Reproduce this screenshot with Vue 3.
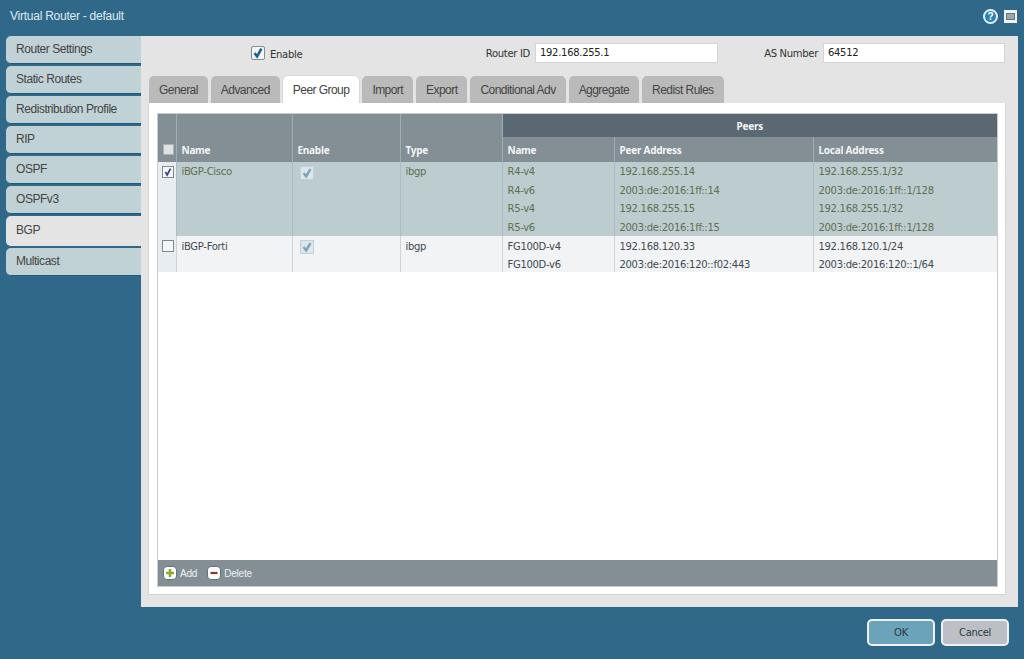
<script setup>
const sideItems = ['Router Settings', 'Static Routes', 'Redistribution Profile', 'RIP', 'OSPF', 'OSPFv3', 'BGP', 'Multicast']
const tabs = ['General', 'Advanced', 'Peer Group', 'Import', 'Export', 'Conditional Adv', 'Aggregate', 'Redist Rules']

const groups = [
  {
    name: 'iBGP-Cisco',
    checked: true,
    peers: [
      ['R4-v4', '192.168.255.14', '192.168.255.1/32'],
      ['R4-v6', '2003:de:2016:1ff::14', '2003:de:2016:1ff::1/128'],
      ['R5-v4', '192.168.255.15', '192.168.255.1/32'],
      ['R5-v6', '2003:de:2016:1ff::15', '2003:de:2016:1ff::1/128']
    ]
  },
  {
    name: 'iBGP-Forti',
    checked: false,
    peers: [
      ['FG100D-v4', '192.168.120.33', '192.168.120.1/24'],
      ['FG100D-v6', '2003:de:2016:120::f02:443', '2003:de:2016:120::1/64']
    ]
  }
]
</script>

<template>
  <div class="dialog">
    <header class="titlebar">
      <span class="title">Virtual Router - default</span>
      <div class="title-icons">
        <span class="help">?</span>
        <span class="restore"><i></i></span>
      </div>
    </header>

    <div class="body">
      <nav class="side">
        <div v-for="item in sideItems" :key="item" class="side-item" :class="{ active: item === 'BGP' }">{{ item }}</div>
      </nav>

      <main class="panel">
        <div class="top-row">
          <label class="enable">
            <span class="check big">
              <svg viewBox="0 0 14 14"><path d="M3 7l3 4 5-9" fill="none" stroke="#1f628e" stroke-width="3"/></svg>
            </span>
            <span class="enable-label">Enable</span>
          </label>
          <div class="field router-id">
            <span>Router ID</span>
            <div class="input">192.168.255.1</div>
          </div>
          <div class="field as-num">
            <span>AS Number</span>
            <div class="input">64512</div>
          </div>
        </div>

        <div class="tabs">
          <div v-for="tab in tabs" :key="tab" class="tab" :class="{ active: tab === 'Peer Group' }">{{ tab }}</div>
        </div>

        <div class="tab-body">
          <div class="grid-wrap">
            <table class="grid">
              <colgroup>
                <col style="width: 18px" />
                <col style="width: 116px" />
                <col style="width: 108px" />
                <col style="width: 102px" />
                <col style="width: 112px" />
                <col style="width: 199px" />
                <col />
              </colgroup>
              <thead>
                <tr class="head-top">
                  <th rowspan="2" class="head-sel"><span class="check head-check"></span></th>
                  <th rowspan="2" class="bottom">Name</th>
                  <th rowspan="2" class="bottom">Enable</th>
                  <th rowspan="2" class="bottom">Type</th>
                  <th colspan="3" class="peers">Peers</th>
                </tr>
                <tr class="head-sub">
                  <th>Name</th>
                  <th>Peer Address</th>
                  <th>Local Address</th>
                </tr>
              </thead>
              <tbody v-for="group in groups" :key="group.name" :class="{ selected: group.checked }">
                <tr v-for="(peer, i) in group.peers" :key="peer[0]">
                  <template v-if="i === 0">
                    <td :rowspan="group.peers.length" class="sel">
                      <span class="check small">
                        <svg v-if="group.checked" viewBox="0 0 12 12"><path d="M3 6l2 3.5L9 2" fill="none" stroke="#3c3f9c" stroke-width="2"/></svg>
                      </span>
                    </td>
                    <td :rowspan="group.peers.length">{{ group.name }}</td>
                    <td :rowspan="group.peers.length">
                      <span class="check ro">
                        <svg viewBox="0 0 14 14"><path d="M3 7l3 4 5-8.5" fill="none" stroke="#7da3bb" stroke-width="2.8"/></svg>
                      </span>
                    </td>
                    <td :rowspan="group.peers.length">ibgp</td>
                  </template>
                  <td v-for="cell in peer" :key="cell">{{ cell }}</td>
                </tr>
              </tbody>
            </table>
            <div class="grid-fill"></div>
            <div class="toolbar">
              <span class="tool">
                <span class="tool-icon">
                  <svg viewBox="0 0 12 12"><path d="M6 2v8M2 6h8" stroke="#8cab1e" stroke-width="2.6"/></svg>
                </span>
                Add
              </span>
              <span class="tool">
                <span class="tool-icon">
                  <svg viewBox="0 0 12 12"><path d="M2.5 6h7" stroke="#8a3a22" stroke-width="2.2"/></svg>
                </span>
                Delete
              </span>
            </div>
          </div>
        </div>
      </main>
    </div>

    <footer class="footer">
      <button class="btn ok">OK</button>
      <button class="btn cancel">Cancel</button>
    </footer>
  </div>
</template>

<style>
html, body {
  margin: 0;
  background: #2f6888;
}
</style>

<style scoped>
.dialog {
  width: 1024px;
  height: 659px;
  background: #2f6888;
  display: flex;
  flex-direction: column;
  overflow: hidden;
  font-family: "DejaVu Sans", sans-serif;
  font-size: 10px;
  letter-spacing: -0.3px;
  color: #333;
}

.titlebar {
  height: 36px;
  flex: none;
  display: flex;
  align-items: center;
  justify-content: space-between;
  padding: 0 7px 4px 10px;
  box-sizing: border-box;
}

.title {
  font-family: "Liberation Sans", sans-serif;
  font-size: 12px;
  letter-spacing: -0.25px;
  color: #dfeaf0;
}

.title-icons {
  display: flex;
  align-items: center;
  gap: 6px;
}

.help {
  width: 15px;
  height: 15px;
  border-radius: 50%;
  background: #2b7fb4;
  border: 2px solid #e4eef4;
  box-sizing: border-box;
  color: #fff;
  font: bold 10px/11px "Liberation Sans", sans-serif;
  text-align: center;
}

.restore {
  width: 13px;
  height: 13px;
  background: #f1f3f4;
  padding: 3px 2px;
  box-sizing: border-box;
}

.restore i {
  display: block;
  height: 100%;
  background: #9aa8b0;
  border: 1px solid #5f7380;
  box-sizing: border-box;
}

.body {
  display: flex;
  height: 571px;
  flex: none;
}

.side {
  width: 135px;
  margin-left: 6px;
  flex: none;
  display: flex;
  flex-direction: column;
  gap: 2px;
}

.side-item {
  height: 28px;
  box-sizing: border-box;
  padding: 0 0 1px 10px;
  display: flex;
  align-items: center;
  background: #c0d2d6;
  border-bottom: 1px solid #1f5a7c;
  border-radius: 5px 0 0 5px;
  font-family: "Liberation Sans", sans-serif;
  font-size: 12px;
  letter-spacing: -0.45px;
  color: #444;
}

.side-item.active {
  height: 30px;
  background: #e4e4e4;
  border-bottom-color: #e4e4e4;
}

.panel {
  width: 877px;
  flex: none;
  background: #e4e4e4;
  display: flex;
  flex-direction: column;
}

.top-row {
  height: 40px;
  flex: none;
  display: flex;
  align-items: flex-start;
  padding-top: 7px;
  box-sizing: border-box;
}

.enable {
  margin-left: 110px;
  width: 222px;
  display: flex;
  align-items: flex-start;
  gap: 5px;
  padding-top: 3px;
  color: #333;
}

.enable-label {
  margin-top: 3px;
}

.check {
  display: inline-block;
  box-sizing: border-box;
  background: #f4f6f7;
  border: 1px solid #7f8b93;
  vertical-align: top;
}

.check svg {
  display: block;
  width: 100%;
  height: 100%;
}

.check.big {
  width: 14px;
  height: 14px;
  border: 1px solid #7f8e98;
  border-radius: 2px;
}

.field {
  display: flex;
  align-items: center;
  gap: 5px;
  color: #333;
  white-space: nowrap;
}

.router-id {
  width: 245px;
  justify-content: flex-end;
}

.as-num {
  margin-left: 46px;
  width: 241px;
  justify-content: flex-end;
}

.input {
  height: 20px;
  box-sizing: border-box;
  background: #fff;
  border: 1px solid #d4d4d4;
  padding-left: 4px;
  line-height: 18px;
  color: #222;
}

.router-id .input {
  width: 183px;
}

.as-num .input {
  width: 182px;
}

.tabs {
  height: 27px;
  flex: none;
  display: flex;
  gap: 3px;
  padding-left: 8px;
}

.tab {
  padding: 0 10px;
  display: flex;
  align-items: center;
  background: #bababa;
  border-radius: 5px 5px 0 0;
  font-family: "Liberation Sans", sans-serif;
  font-size: 12px;
  letter-spacing: -0.55px;
  color: #444;
}

.tab.active {
  background: #fff;
  box-shadow: 0 0 0 1px #d8d8d8;
}

.tab-body {
  width: 858px;
  height: 492px;
  margin-left: 7px;
  background: #fff;
  padding: 10px 8px 0 8px;
  box-sizing: border-box;
  border: 1px solid #d6d6d6;
  border-top: none;
}

.grid-wrap {
  width: 841px;
  height: 474px;
  display: flex;
  flex-direction: column;
  border: 1px solid #c8ccce;
  box-sizing: border-box;
}

.grid {
  width: 100%;
  table-layout: fixed;
  border-collapse: collapse;
  flex: none;
}

th {
  background: #848e95;
  color: #f3f5f6;
  text-align: left;
  font-family: "Noto Sans", sans-serif;
  font-weight: bold;
  font-size: 10px;
  letter-spacing: -0.25px;
  padding: 0 5px;
  border-left: 1px solid #a3acb1;
}

th.bottom {
  vertical-align: bottom;
  padding-bottom: 5px;
}

.head-top {
  height: 23px;
}

.head-sub {
  height: 25px;
}

th.peers {
  background: #5a6873;
  text-align: center;
}

.head-sel {
  vertical-align: bottom;
  padding: 0 0 4px 5px;
  border-left: none;
}

.head-check {
  width: 11px;
  height: 11px;
  background: #dfe2e4;
  border-color: #aab1b6;
}

td {
  height: 18px;
  padding: 3px 5px 0;
  box-sizing: border-box;
  vertical-align: top;
  line-height: 15px;
  white-space: nowrap;
  background: #f1f3f5;
  color: #3f4a50;
  border-left: 1px solid #ccd4d8;
}

tbody.selected td {
  height: 18.5px;
  padding-top: 2px;
  line-height: 16px;
  background: #bccccf;
  color: #5f6f4f;
  border-left-color: #a9bdc6;
}

tbody td.sel,
tbody.selected td.sel {
  background: #e7edf1;
  padding: 4px 0 0 4px;
  border-left: none;
}

.check.small {
  width: 12px;
  height: 12px;
}

td .check.ro {
  width: 14px;
  height: 14px;
  margin: 1px 0 0 2px;
  background: #dde6ea;
  border: 1px solid #c4d0d6;
}

tbody.selected td .check.ro {
  margin-top: 2px;
}

.grid-fill {
  flex: 1;
  background: #fff;
}

.toolbar {
  height: 26px;
  flex: none;
  background: #848e95;
  display: flex;
  align-items: center;
  gap: 10px;
  padding-left: 5px;
  font-family: "Liberation Sans", sans-serif;
  letter-spacing: -0.2px;
  color: #eef1f2;
}

.tool {
  display: flex;
  align-items: center;
  gap: 3px;
}

.tool-icon {
  width: 14px;
  height: 14px;
  background: #fff;
  border-radius: 4px;
  border: 1px solid #5f7480;
  box-sizing: border-box;
}

.tool-icon svg {
  display: block;
  width: 100%;
  height: 100%;
}

.footer {
  flex: 1;
  display: flex;
  justify-content: flex-end;
  align-items: flex-start;
  gap: 6px;
  padding: 12px 15px 0 0;
}

.btn {
  width: 68px;
  height: 27px;
  border: 2px solid #eef2f4;
  border-radius: 5px;
  box-sizing: border-box;
  font-family: "DejaVu Sans", sans-serif;
  font-size: 10px;
  letter-spacing: -0.3px;
  color: #2c3a42;
  padding: 0;
}

.ok {
  background: #6ba3bb;
}

.cancel {
  background: #bcc0c6;
}
</style>
